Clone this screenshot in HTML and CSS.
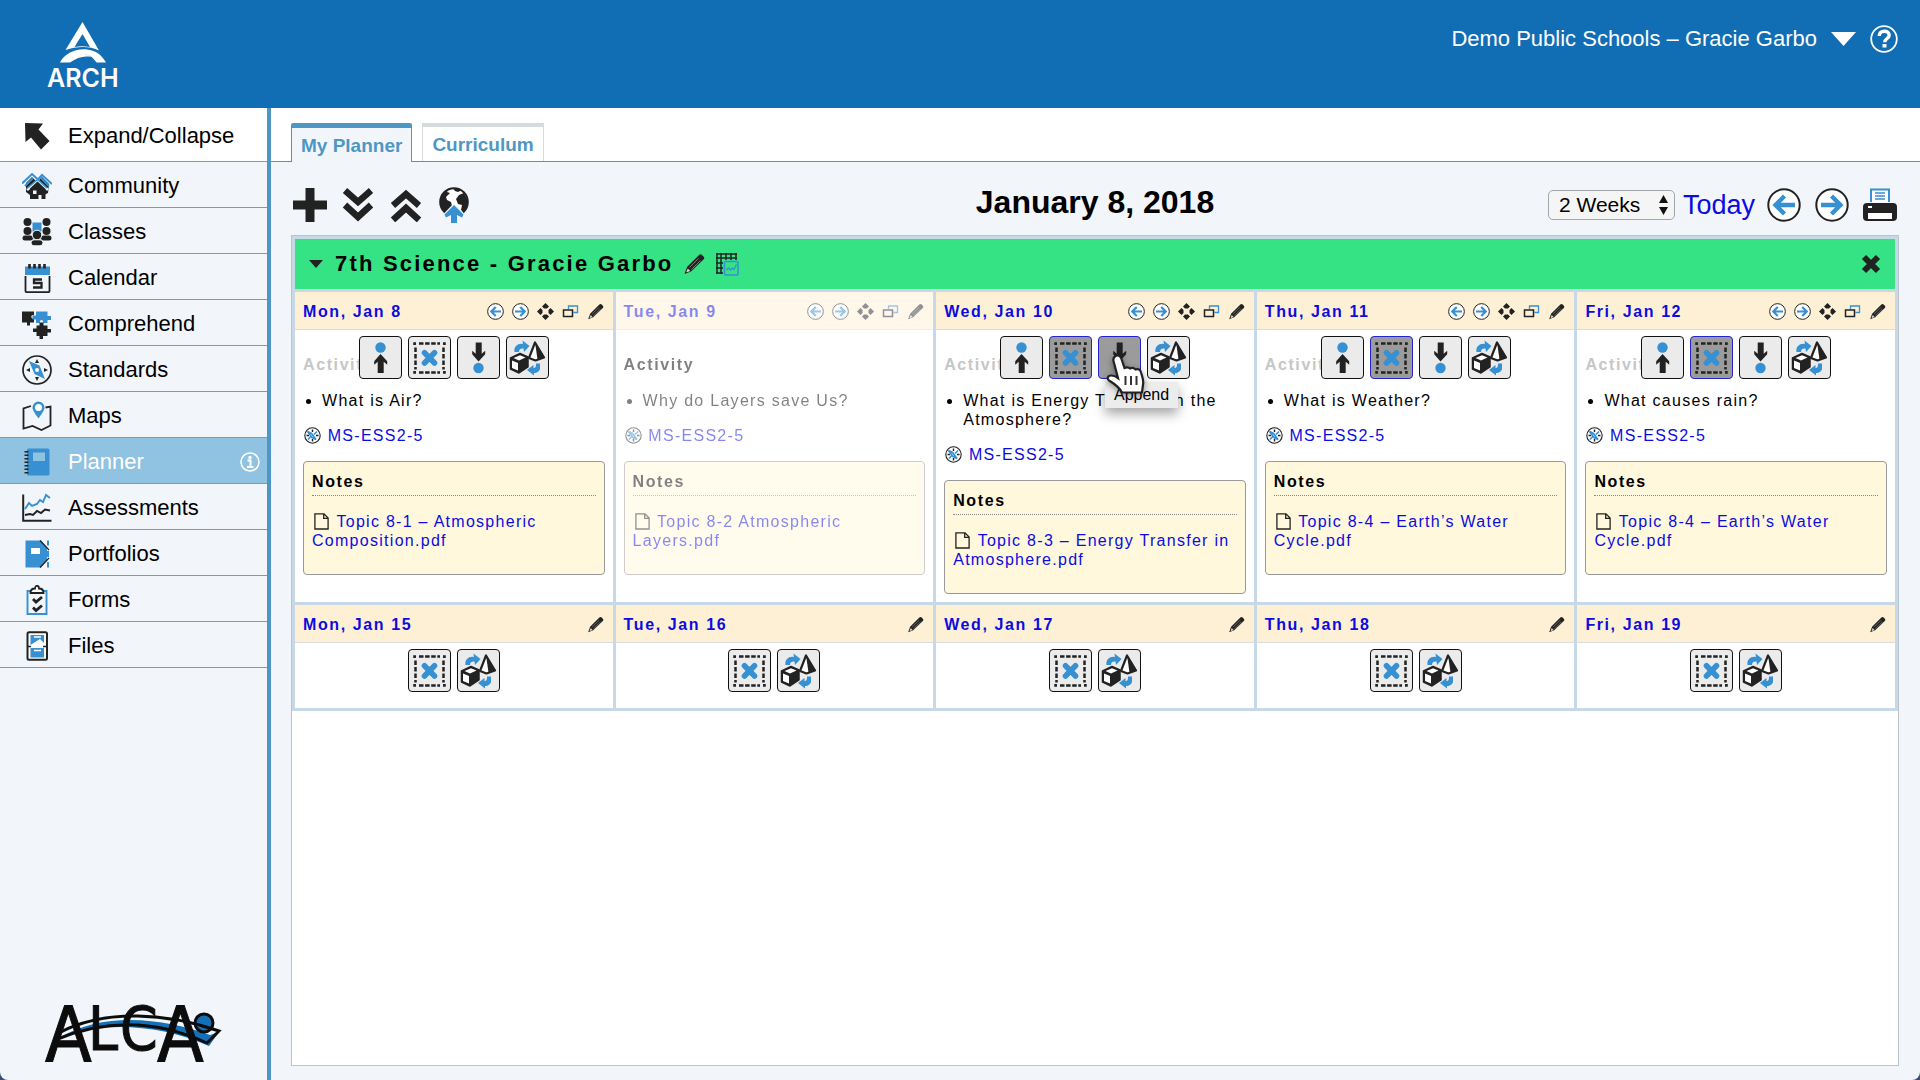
FILE: index.html
```html
<!DOCTYPE html>
<html lang="en">
<head>
<meta charset="utf-8">
<title>ARCH – Planner</title>
<link rel="stylesheet" href="styles.css">
</head>
<body>
<svg class="sprite" aria-hidden="true">
  <symbol id="prev" viewBox="0 0 34 34"><circle cx="17" cy="17" r="15.7" fill="#fff" stroke="#222" stroke-width="2"/><path d="M28 17H10M17.5 8l-9 9 9 9" fill="none" stroke="#3690d2" stroke-width="4.4"/></symbol>
  <symbol id="next" viewBox="0 0 34 34"><circle cx="17" cy="17" r="15.7" fill="#fff" stroke="#222" stroke-width="2"/><path d="M6 17h18M16.500 8l9 9-9 9" fill="none" stroke="#3690d2" stroke-width="4.400"/></symbol>
  <symbol id="move" viewBox="0 0 17 17"><path d="M8.500 0l3.500 3.500-2 2H7l-2-2zM8.500 17l3.500-3.500-2-2H7l-2 2zM0 8.500L3.500 5l2 2v3l-2 2zM17 8.500L13.500 5l-2 2v3l2 2z" fill="#222"/></symbol>
  <symbol id="copy" viewBox="0 0 17 17"><path d="M6.500 6V3h9v6.500h-4" fill="none" stroke="#3690d2" stroke-width="1.300"/><path d="M1.500 7h9v6.500h-9z" fill="none" stroke="#222" stroke-width="1.500"/></symbol>
  <symbol id="pencil" viewBox="0 0 22 22"><path d="M16 2q1.500-1.500 3 0l1.500 1.500q1.500 1.500 0 3L8 18.500 1.500 21 4 14z" fill="#222"/><path d="M6.500 14.500L15.500 5.500M8.500 16.500L17.500 7.500" stroke="#fff" stroke-opacity=".5" stroke-width=".8"/><path d="M4.800 15.500l2.500 2.500-3.300 1.300-.6-.6z" fill="#fff" fill-opacity=".8"/></symbol>
  <symbol id="prepend" viewBox="0 0 41 41"><circle cx="20.500" cy="10.500" r="5.200" fill="#3690d2"/><path d="M20.500 17l6.700 7.200v3.600l-3.500-3V36h-6V24.800l-3.500 3v-3.600z" fill="#222"/></symbol>
  <symbol id="append" viewBox="0 0 41 41"><circle cx="20.500" cy="31" r="5.200" fill="#3690d2"/><path d="M20.500 24.500l6.700-7.200v-3.600l-3.500 3V5.500h-6v11.200l-3.500-3v3.600z" fill="#222"/></symbol>
  <symbol id="clear" viewBox="0 0 41 41"><path d="M5.500 8V6.500H7M34 6.500h1.500V8M35.500 34v1.500H34M7 35.500H5.500V34M10 6.500h21M10 35.500h21" fill="none" stroke="#222" stroke-width="2.500" stroke-dasharray="4.500 1.600"/><path d="M6.500 10.500v22M34.500 10.500v22" stroke="#222" stroke-width="2.500" stroke-dasharray="4.500 2"/><path d="M15.500 15.800L25.500 26M25.500 15.800L15.500 26" stroke="#3690d2" stroke-width="5.600" stroke-linecap="round"/></symbol>
  <symbol id="convert" viewBox="0 0 41 41"><path d="M7.500 15c-1-6 4-9 8.500-8l-.5-3.500L22.500 9l-5.500 6-.5-3.500c-3-.5-4.500 1-4.500 3.500z" fill="#3690d2"/><path d="M33 26.500v5c0 2.500-3 4.500-6 4.500v2.500L20 33l6.500-5v3c2 0 2.500-1 2.500-4.500z" fill="#3690d2"/><path d="M28 5.500L22 21l6.500 2.500 8.500-3z" fill="#fff" stroke="#222" stroke-width="2.200" stroke-linejoin="round"/><path d="M28 5l2.500 17.500 7-2.500z" fill="#222"/><path d="M3.500 21l9.500-4.500 8 3.500v10L12 36l-8.500-4z" fill="#222" stroke="#222" stroke-width="1.500" stroke-linejoin="round"/><path d="M5 23.500l6 2.500v7.500L5 31z" fill="#fff"/><path d="M6.500 21l6.500-2.800 5.500 2.200-6.500 3z" fill="#fff"/></symbol>
  <symbol id="standard" viewBox="0 0 17 17"><circle cx="8.500" cy="8.500" r="7.700" fill="#fff" stroke="#222" stroke-width="1.100"/><path d="M3.500 4.500l4 2 4.500 6-4-2zM4 12.500l3-3.300M10 7.500l3-3" fill="none" stroke="#3690d2" stroke-width="1.600"/><path d="M8.500 2.500V5M8.500 12v2.500M2.500 8.500H5M12 8.500h2.500" stroke="#222" stroke-width="1.400"/></symbol>
  <symbol id="doc" viewBox="0 0 15 17"><path d="M.9.900H10L14.100 5v11H.900zM9.700 1v4.300H14" fill="none" stroke="#222" stroke-width="1.300"/></symbol>
</svg>

<header class="banner">
  <a class="brand" href="#" aria-label="ARCH home">
    <svg class="brand-mark" viewBox="0 0 46 41" aria-hidden="true"><path fill="#fff" fill-rule="evenodd" d="M22.500 0L39 28.500c-9-4.500-22-4.500-33.500-.5zM22.500 12l-8 13c5-1.200 10.500-1 15.500 0zM0 40.500C5 31 16 26.500 27 27.500c8 .8 14 4.500 19 13h-9.500c-4-6-8-8-12.500-8 3 .3 5 1 7 2.500-7-1.500-14 .5-21 5.500z"/></svg>
    <span class="brand-name">ARCH</span>
  </a>
  <div class="account">
    <span>Demo Public Schools – Gracie Garbo</span>
    <button class="plain" aria-label="Account menu"><svg width="25" height="14" viewBox="0 0 25 14"><path d="M0 0h25L12.500 14z" fill="#fff"/></svg></button>
    <button class="plain" aria-label="Help"><svg width="28" height="28" viewBox="0 0 28 28"><circle cx="14" cy="14" r="12.800" fill="none" stroke="#fff" stroke-width="1.800"/><path d="M9.200 11c0-6.500 10-6 10-.8 0 3.300-4.500 3.300-4.500 7" fill="none" stroke="#fff" stroke-width="3.400"/><path d="M12.500 19h4v3.500h-4z" fill="#fff"/></svg></button>
  </div>
</header>

<div class="shell">
  <nav class="sidebar" aria-label="Main">
    <a class="nav-item nav-toggle" href="#"><svg viewBox="0 0 30 30"><path d="M3 2l18 .5-4.500 6L27.500 20 19 28.500 9 16.500 3.500 21z" fill="#222"/></svg>Expand/Collapse</a>
    <a class="nav-item" href="#"><svg viewBox="0 0 30 30"><path d="M4 12l6-6 5 5 5-5 7 7-1 9-4 2H8l-4-3z" fill="#222"/><path d="M0 12.500L10 3l6 5.500 4-4.500 10 9M3 15L11 7M19 7l8 8" fill="none" stroke="#3690d2" stroke-width="2"/><path d="M5 19L15.500 9.500 26 19" fill="none" stroke="#f2f6fb" stroke-width="2.500"/><path d="M8 17.500l7.500-7 8 7.500v10h-4V20h-3v8H8z" fill="#222"/><path d="M11 19.500h3.500V23H11z" fill="#f2f6fb"/><path d="M5 17.500L15.500 8.500 25 17" fill="none" stroke="#3690d2" stroke-width="1.600"/></svg>Community</a>
    <a class="nav-item" href="#"><svg viewBox="0 0 30 30"><path d="M10.500 5.500h9v9h-9z" fill="#3690d2"/><g fill="#222"><circle cx="5.500" cy="5" r="4"/><circle cx="24.500" cy="5" r="4"/><circle cx="5.500" cy="14" r="4"/><circle cx="24.500" cy="14" r="4"/><rect x=".5" y="18.500" width="10.500" height="5" rx="2.500"/><rect x="19" y="18.500" width="10.500" height="5" rx="2.500"/></g><g fill="#222" stroke="#f2f6fb"><circle cx="15" cy="18" r="4.800"/><rect x="9" y="22.800" width="12" height="6" rx="3"/></g></svg>Classes</a>
    <a class="nav-item" href="#"><svg viewBox="0 0 30 30"><path d="M3 3.500h25V12H3z" fill="#3690d2"/><path d="M3.500 13v15q0 1.200 1.200 1.200h21.600q1.200 0 1.200-1.200V13" fill="none" stroke="#222" stroke-width="1.800"/><path d="M7.500 1v4.500M12.500 1v4.500M17.500 1v4.500M22.500 1v4.500" stroke="#222" stroke-width="2.600"/><path d="M20 16.500h-8V20h7.500v4.500h-8.500" fill="none" stroke="#222" stroke-width="2.300"/></svg>Calendar</a>
    <a class="nav-item" href="#"><svg viewBox="0 0 30 30"><path d="M0 2.500h12v4c-3-2-4 4 0 3v4H8v3H5v-3H0z" fill="#222"/><path d="M14 2.500h11.500V7H29v4h-3.500v3H21c1-4-4-4-3 0h-4v-3.500h-3.500v-4H14z" fill="#3690d2"/><path d="M14.500 16.500h3v-3h4v3h4V20H29v3.500h-3.500V27H21v3h-3.500v-3h-3v-4H11v-3.500h3.500z" fill="#222"/></svg>Comprehend</a>
    <a class="nav-item" href="#"><svg viewBox="0 0 30 30"><circle cx="15" cy="15" r="14" fill="none" stroke="#222" stroke-width="1.700"/><path d="M7 6l10.500 4.500L23 24l-10.500-5z" fill="#3690d2"/><circle cx="15" cy="15" r="2" fill="#fff"/><path d="M15 4l2 4h-4zM15 26l2-4h-4zM4 15l4-2v4zM26 15l-4-2v4z" fill="#222"/></svg>Standards</a>
    <a class="nav-item" href="#"><svg viewBox="0 0 30 30"><path d="M9 5L1.500 7.500v20l9-2.500 9 4 9-4.500V5.500l-5 1" fill="none" stroke="#222" stroke-width="1.800"/><path d="M16.500 17.500C12 11 10.500 9 10.500 6.500a6 6 0 0 1 12 0c0 2.500-1.500 4.500-6 11z" fill="#3690d2"/><circle cx="16.500" cy="6.500" r="3.500" fill="#fff"/></svg>Maps</a>
    <a class="nav-item nav-current" href="#" aria-current="page"><svg viewBox="0 0 30 30"><rect x="5" y="1.500" width="22.500" height="27" rx="1.500" fill="#3690d2"/><path d="M11 5.500h12V14H11z" fill="#90c3e1"/><path d="M4.500 4v24" stroke="#222" stroke-width="4" stroke-dasharray="1.500 2"/></svg>Planner<svg class="nav-info" viewBox="0 0 20 20"><circle cx="10" cy="10" r="9" fill="none" stroke="#fff" stroke-width="1.500"/><circle cx="10" cy="5.500" r="1.700" fill="#fff"/><path d="M7.500 8.500h3v6M7 15h6.500" fill="none" stroke="#fff" stroke-width="2"/></svg></a>
    <a class="nav-item" href="#"><svg viewBox="0 0 30 30"><path d="M1.200 1.500v26.300H29.500" fill="none" stroke="#222" stroke-width="2"/><path d="M3 16l4-6 3 3 5-2 3-4 3 2 3-7 4 3" fill="none" stroke="#3690d2" stroke-width="1.900"/><path d="M3 22l5-1 3 1 4-4 4 2 4-3.500 5 1" fill="none" stroke="#222" stroke-width="1.900"/></svg>Assessments</a>
    <a class="nav-item" href="#"><svg viewBox="0 0 30 30"><path d="M3.500 1.500H19l6 7v13l-6 7H3.500z" fill="#3690d2"/><path d="M9 9h9v6H9z" fill="#fff"/><path d="M26 1.500v5M26 12v6M26 23v5.500" stroke="#3690d2" stroke-width="2"/><path d="M18 1.500L27 11M18 28.500L27 19" stroke="#222" stroke-width="1.200"/></svg>Portfolios</a>
    <a class="nav-item" href="#"><svg viewBox="0 0 30 30"><path d="M8 6H5.500v23h19V6H22" fill="none" stroke="#3690d2" stroke-width="1.900"/><path d="M8.500 8c0-4 3-4.500 4.500-4.500 0-3.500 4-3.500 4 0 2 0 4.500.5 4.500 4.500z" fill="#fff" stroke="#222" stroke-width="1.800"/><path d="M11 14l3 3 6-5M11 22.500l3 3 6-5" fill="none" stroke="#222" stroke-width="2.800"/></svg>Forms</a>
    <a class="nav-item" href="#"><svg viewBox="0 0 30 30"><rect x="5.500" y="1.200" width="19.500" height="27.500" rx="1.500" fill="#fff" stroke="#222" stroke-width="2"/><path d="M8.500 4H22v8l-4-4-9.500 6zM8.500 17H22v9.500H8.500z" fill="#3690d2"/><path d="M12 6h7M12 19.500h7" stroke="#fff" stroke-width="1.500"/><path d="M7 15l11-6 5 6-1 2H8z" fill="#fff"/><path d="M5 15.500h4M21 15.500h4" stroke="#222" stroke-width="1.300"/></svg>Files</a>
    <svg class="partner" viewBox="0 0 178 64" role="img" aria-label="ALCA">
      <path d="M12 37C60 8 120 17 165 33l9-3-10 14C110 20 50 20 12 37z" fill="#1471b8"/>
      <circle cx="160" cy="21" r="9" fill="#1471b8"/>
      <g class="partner-letters"><text x="0" y="59" font-size="76">A</text><text x="43" y="48" font-size="60">L</text><text x="75" y="48" font-size="60">C</text><text x="112" y="59" font-size="76">A</text></g>
      <path d="M12 32C60 5 125 12 174 29l-12 12C110 17 60 17 10 38" fill="none" stroke="#0c0c0c" stroke-width="3"/>
      <circle cx="159" cy="21" r="9" fill="none" stroke="#0c0c0c" stroke-width="3"/>
    </svg>
  </nav>

  <main class="main">
    <div class="tabs">
      <a class="tab tab-active" href="#">My Planner</a>
      <a class="tab" href="#">Curriculum</a>
    </div>
    <div class="content">
      <div class="toolbar">
        <div class="tools">
          <button class="plain" aria-label="Add"><svg width="34" height="34" viewBox="0 0 34 34"><path d="M12.500 0h9v12.500H34v9H21.500V34h-9V21.500H0v-9h12.500z" fill="#222"/></svg></button>
          <button class="plain" aria-label="Expand all"><svg width="34" height="34" viewBox="0 0 34 34"><path d="M4 2.500l13 11.500L30 2.500M4 17l13 12L30 17" fill="none" stroke="#222" stroke-width="6.500"/></svg></button>
          <button class="plain" aria-label="Collapse all"><svg width="34" height="34" viewBox="0 0 34 34"><path d="M4 17.500L17 6l13 11.500M4 32l13-12 13 12" fill="none" stroke="#222" stroke-width="6.500"/></svg></button>
          <button class="plain" aria-label="Publish"><svg width="34" height="36" viewBox="0 0 34 36"><circle cx="17" cy="15" r="13.800" fill="#fff" stroke="#222" stroke-width="2"/><path d="M3.500 13C4 8 8 3.500 12 2l-2 3 3 1-4 4 1 3 4 2 1 4-3 3-1 5c-5-2-8-8-7.500-14zM16 1.500c3-.5 6 .5 8 2l-3 1.500-3-1zM22 8l5-2 3 6c1 5 0 9-4 13l-2-2 1-5-4-1-2-5z" fill="#222"/><path d="M17 16l11 11.500h-6V36H12v-8.500H6z" fill="#f2f6fb"/><path d="M17 18l9.500 9.500-1.500 3-5-2.500v8h-6v-8l-5 2.500-1.500-3z" fill="#3690d2"/></svg></button>
        </div>
        <h1 class="range-title">January 8, 2018</h1>
        <div class="range">
          <span class="select-box">
            <select aria-label="Range"><option>2 Weeks</option></select>
            <svg width="11" height="20" viewBox="0 0 11 20" aria-hidden="true"><path d="M1 8l4.500-8L10 8zM1 12h9l-4.500 8z" fill="#111"/></svg>
          </span>
          <a class="today" href="#">Today</a>
          <button class="plain" aria-label="Previous"><svg width="34" height="34"><use href="#prev"/></svg></button>
          <button class="plain" aria-label="Next"><svg width="34" height="34"><use href="#next"/></svg></button>
          <button class="plain" aria-label="Print"><svg width="34" height="34" viewBox="0 0 34 34"><path d="M8 14V1.500h18V14" fill="#fff" stroke="#3690d2" stroke-width="2"/><path d="M12 5h10M12 8h10M12 11h10" stroke="#3690d2" stroke-width="1.400"/><rect y="15" width="34" height="18" rx="4" fill="#222"/><path d="M5 25h24v6H5z" fill="#fff"/><rect x="5" y="18" width="4" height="2" fill="#fff"/></svg></button>
        </div>
      </div>

      <div class="planner">
        <table class="weeks">
          <thead>
            <tr><th colspan="5" scope="colgroup">
              <div class="course">
                <button class="plain" aria-label="Fold course"><svg width="14" height="8" viewBox="0 0 14 8"><path d="M0 0h14L7 8z" fill="#222"/></svg></button>
                <span class="course-name">7th Science - Gracie Garbo</span>
                <button class="plain" aria-label="Edit course"><svg width="22" height="22"><use href="#pencil"/></svg></button>
                <button class="plain" aria-label="Course grid"><svg width="24" height="24" viewBox="0 0 24 24"><path d="M1 2h21M1 6h21M1 11h7M1 16h7M1 21h7M2 1v21M6 1v21M11 1v7M16 1v7M21 1v7" stroke="#222" stroke-width="1.500"/><rect x="9.500" y="9.500" width="13.500" height="13.500" rx="1" fill="none" stroke="#3690d2" stroke-width="1.500"/><path d="M11.500 18l2-2 2 2 2-2 1.500 1.500 2.500-5" fill="none" stroke="#3690d2" stroke-width="1.300"/></svg></button>
                <button class="plain course-close" aria-label="Close course"><svg width="20" height="20" viewBox="0 0 20 20"><path d="M3 3l14 14M17 3L3 17" stroke="#222" stroke-width="6"/></svg></button>
              </div>
            </th></tr>
          </thead>
          <tbody>
            <tr>
              <td>
                <div class="day-head"><a href="#">Mon, Jan 8</a><button class="plain" aria-label="Shift back"><svg><use href="#prev"/></svg></button><button class="plain" aria-label="Shift forward"><svg><use href="#next"/></svg></button><button class="plain" aria-label="Move"><svg><use href="#move"/></svg></button><button class="plain" aria-label="Copy"><svg><use href="#copy"/></svg></button><button class="plain" aria-label="Edit"><svg><use href="#pencil"/></svg></button></div>
                <div class="day">
                  <div class="actions over"><button class="act" aria-label="Prepend"><svg><use href="#prepend"/></svg></button><button class="act" aria-label="Replace"><svg><use href="#clear"/></svg></button><button class="act" aria-label="Append"><svg><use href="#append"/></svg></button><button class="act" aria-label="Convert"><svg><use href="#convert"/></svg></button></div>
                  <h2 class="faint">Activity</h2>
                  <ul><li>What is Air?</li></ul>
                  <p><svg class="std"><use href="#standard"/></svg> <a href="#">MS-ESS2-5</a></p>
                  <section class="note"><h3>Notes</h3><p><svg class="file"><use href="#doc"/></svg> <a href="#">Topic 8-1 – Atmospheric Composition.pdf</a></p></section>
                </div>
              </td>
              <td>
                <div class="cut">
                <div class="day-head"><a href="#">Tue, Jan 9</a><button class="plain" aria-label="Shift back"><svg><use href="#prev"/></svg></button><button class="plain" aria-label="Shift forward"><svg><use href="#next"/></svg></button><button class="plain" aria-label="Move"><svg><use href="#move"/></svg></button><button class="plain" aria-label="Copy"><svg><use href="#copy"/></svg></button><button class="plain" aria-label="Edit"><svg><use href="#pencil"/></svg></button></div>
                <div class="day">
                  <h2>Activity</h2>
                  <ul><li>Why do Layers save Us?</li></ul>
                  <p><svg class="std"><use href="#standard"/></svg> <a href="#">MS-ESS2-5</a></p>
                  <section class="note"><h3>Notes</h3><p><svg class="file"><use href="#doc"/></svg> <a href="#">Topic 8-2 Atmospheric Layers.pdf</a></p></section>
                </div>
                </div>
              </td>
              <td>
                <div class="day-head"><a href="#">Wed, Jan 10</a><button class="plain" aria-label="Shift back"><svg><use href="#prev"/></svg></button><button class="plain" aria-label="Shift forward"><svg><use href="#next"/></svg></button><button class="plain" aria-label="Move"><svg><use href="#move"/></svg></button><button class="plain" aria-label="Copy"><svg><use href="#copy"/></svg></button><button class="plain" aria-label="Edit"><svg><use href="#pencil"/></svg></button></div>
                <div class="day">
                  <div class="actions over"><button class="act" aria-label="Prepend"><svg><use href="#prepend"/></svg></button><button class="act pressed" aria-label="Replace"><svg><use href="#clear"/></svg></button><span class="hovered"><button class="act pressed" aria-label="Append" aria-describedby="tip"><svg><use href="#append"/></svg></button><span class="tip" id="tip" role="tooltip">Append</span><svg class="pointer" viewBox="0 0 42 40" aria-hidden="true"><path d="M9.500 2c2.500-1.500 5 0 6 3l3 9c2-1 4-1 5.500.5 2-1 4-.5 5.500 1 2.500-1 5 0 5.500 3 1.500 5 3 8 2 12l-1 8H16c-3-6-8-9-13-12-2.500-2-1-5 2-5 3 0 5 1 7 2.500L7.500 7c-.5-2 .3-4 2-5z" fill="#fff" stroke="#222" stroke-width="2.200"/><path d="M19.500 22v9M25 22v9M30.500 22v9" stroke="#333" stroke-width="2"/></svg></span><button class="act" aria-label="Convert"><svg><use href="#convert"/></svg></button></div>
                  <h2 class="faint">Activity</h2>
                  <ul><li>What is Energy Transfer in the Atmosphere?</li></ul>
                  <p><svg class="std"><use href="#standard"/></svg> <a href="#">MS-ESS2-5</a></p>
                  <section class="note"><h3>Notes</h3><p><svg class="file"><use href="#doc"/></svg> <a href="#">Topic 8-3 – Energy Transfer in Atmosphere.pdf</a></p></section>
                </div>
              </td>
              <td>
                <div class="day-head"><a href="#">Thu, Jan 11</a><button class="plain" aria-label="Shift back"><svg><use href="#prev"/></svg></button><button class="plain" aria-label="Shift forward"><svg><use href="#next"/></svg></button><button class="plain" aria-label="Move"><svg><use href="#move"/></svg></button><button class="plain" aria-label="Copy"><svg><use href="#copy"/></svg></button><button class="plain" aria-label="Edit"><svg><use href="#pencil"/></svg></button></div>
                <div class="day">
                  <div class="actions over"><button class="act" aria-label="Prepend"><svg><use href="#prepend"/></svg></button><button class="act pressed" aria-label="Replace"><svg><use href="#clear"/></svg></button><button class="act" aria-label="Append"><svg><use href="#append"/></svg></button><button class="act" aria-label="Convert"><svg><use href="#convert"/></svg></button></div>
                  <h2 class="faint">Activity</h2>
                  <ul><li>What is Weather?</li></ul>
                  <p><svg class="std"><use href="#standard"/></svg> <a href="#">MS-ESS2-5</a></p>
                  <section class="note"><h3>Notes</h3><p><svg class="file"><use href="#doc"/></svg> <a href="#">Topic 8-4 – Earth’s Water Cycle.pdf</a></p></section>
                </div>
              </td>
              <td>
                <div class="day-head"><a href="#">Fri, Jan 12</a><button class="plain" aria-label="Shift back"><svg><use href="#prev"/></svg></button><button class="plain" aria-label="Shift forward"><svg><use href="#next"/></svg></button><button class="plain" aria-label="Move"><svg><use href="#move"/></svg></button><button class="plain" aria-label="Copy"><svg><use href="#copy"/></svg></button><button class="plain" aria-label="Edit"><svg><use href="#pencil"/></svg></button></div>
                <div class="day">
                  <div class="actions over"><button class="act" aria-label="Prepend"><svg><use href="#prepend"/></svg></button><button class="act pressed" aria-label="Replace"><svg><use href="#clear"/></svg></button><button class="act" aria-label="Append"><svg><use href="#append"/></svg></button><button class="act" aria-label="Convert"><svg><use href="#convert"/></svg></button></div>
                  <h2 class="faint">Activity</h2>
                  <ul><li>What causes rain?</li></ul>
                  <p><svg class="std"><use href="#standard"/></svg> <a href="#">MS-ESS2-5</a></p>
                  <section class="note"><h3>Notes</h3><p><svg class="file"><use href="#doc"/></svg> <a href="#">Topic 8-4 – Earth’s Water Cycle.pdf</a></p></section>
                </div>
              </td>
            </tr>
            <tr>
              <td><div class="day-head"><a href="#">Mon, Jan 15</a><button class="plain" aria-label="Edit"><svg><use href="#pencil"/></svg></button></div><div class="actions"><button class="act" aria-label="Replace"><svg><use href="#clear"/></svg></button><button class="act" aria-label="Convert"><svg><use href="#convert"/></svg></button></div></td>
              <td><div class="day-head"><a href="#">Tue, Jan 16</a><button class="plain" aria-label="Edit"><svg><use href="#pencil"/></svg></button></div><div class="actions"><button class="act" aria-label="Replace"><svg><use href="#clear"/></svg></button><button class="act" aria-label="Convert"><svg><use href="#convert"/></svg></button></div></td>
              <td><div class="day-head"><a href="#">Wed, Jan 17</a><button class="plain" aria-label="Edit"><svg><use href="#pencil"/></svg></button></div><div class="actions"><button class="act" aria-label="Replace"><svg><use href="#clear"/></svg></button><button class="act" aria-label="Convert"><svg><use href="#convert"/></svg></button></div></td>
              <td><div class="day-head"><a href="#">Thu, Jan 18</a><button class="plain" aria-label="Edit"><svg><use href="#pencil"/></svg></button></div><div class="actions"><button class="act" aria-label="Replace"><svg><use href="#clear"/></svg></button><button class="act" aria-label="Convert"><svg><use href="#convert"/></svg></button></div></td>
              <td><div class="day-head"><a href="#">Fri, Jan 19</a><button class="plain" aria-label="Edit"><svg><use href="#pencil"/></svg></button></div><div class="actions"><button class="act" aria-label="Replace"><svg><use href="#clear"/></svg></button><button class="act" aria-label="Convert"><svg><use href="#convert"/></svg></button></div></td>
            </tr>
          </tbody>
        </table>
      </div>
    </div>
  </main>
</div>
</body>
</html>
```
FILE: styles.css
```css
* { box-sizing: border-box; }

body {
  margin: 0;
  min-height: 100vh;
  display: flex;
  flex-direction: column;
  background: #3d4c73;
  color: #000;
  font-family: "Liberation Sans", Arial, sans-serif;
  font-size: 16px;
  line-height: 19px;
}

svg { display: block; }
.sprite { position: absolute; width: 0; height: 0; }

a { color: #0c0ce0; text-decoration: none; }
h1, h2, h3, p, ul { margin: 0; }

.plain {
  display: block;
  padding: 0;
  border: 0;
  background: none;
  cursor: pointer;
}

/* Banner */
.banner {
  display: flex;
  justify-content: space-between;
  align-items: flex-start;
  height: 108px;
  padding: 22px 22px 0 47px;
  background: #116db4;
  color: #fff;
}
.brand {
  display: flex;
  flex-direction: column;
  align-items: center;
  color: #fff;
}
.brand-mark { width: 46px; height: 41px; }
.brand-name {
  font: 600 25px/31px Inter, sans-serif;
}
.account {
  display: flex;
  align-items: center;
  gap: 14px;
  padding-top: 3px;
  font-size: 22px;
  line-height: 28px;
}

/* Sidebar */
.shell { display: flex; flex: 1; }
.sidebar {
  display: flex;
  flex-direction: column;
  flex: none;
  width: 271px;
  border-right: 4px solid #4f97c3;
  border-bottom-left-radius: 8px;
  background: #f2f6fb;
}
.nav-item {
  display: flex;
  align-items: center;
  gap: 16px;
  height: 46px;
  padding: 2px 7px 0 22px;
  border-bottom: 1px solid #8399ab;
  color: #000;
  font-size: 22px;
}
.nav-item svg { width: 30px; height: 30px; }
.nav-toggle { height: 54px; background: #fff; }
.nav-current { background: #90c3e1; color: #fff; }
.nav-item .nav-info { width: 20px; height: 20px; margin-left: auto; }
.partner {
  width: 178px;
  height: 64px;
  margin: auto 0 14px 45px;
  overflow: visible;
}
.partner-letters {
  fill: #0c0c0c;
  stroke: #0c0c0c;
  font-family: "DejaVu Sans Condensed", "DejaVu Sans", sans-serif;
}

/* Tabs */
.main {
  display: flex;
  flex-direction: column;
  flex: 1;
  min-width: 0;
  border-bottom-right-radius: 8px;
  background: #f2f6fb;
}
.tabs {
  display: flex;
  align-items: flex-end;
  gap: 10px;
  height: 54px;
  padding-left: 20px;
  border-bottom: 1px solid #4f97c3;
  background: #fff;
}
.tab {
  height: 38px;
  padding: 8px 9px 0;
  border: 1px solid #d6dbde;
  border-top-width: 4px;
  border-bottom: 0;
  color: #4f97c3;
  font-size: 19px;
  font-weight: bold;
}
.tab-active {
  height: 39px;
  margin-bottom: -1px;
  border-color: #4f97c3;
  border-top-width: 5px;
  border-radius: 2px 2px 0 0;
  background: #f2f6fb;
}

/* Toolbar */
.content {
  display: flex;
  flex-direction: column;
  flex: 1;
  padding: 0 21px 14px 20px;
}
.toolbar {
  display: grid;
  grid-template-columns: 1fr auto 1fr;
  align-items: center;
  height: 73px;
  padding: 12px 2px 0;
}
.tools { display: flex; align-items: center; gap: 14px; }
.range-title { font-size: 32px; line-height: 36px; margin-bottom: 6px; }
.range { display: flex; align-items: center; justify-content: flex-end; gap: 14px; }
.select-box { position: relative; margin-right: -6px; }
.select-box select {
  display: block;
  appearance: none;
  width: 127px;
  height: 30px;
  padding: 0 10px;
  border: 1px solid #a3a6aa;
  border-radius: 5px;
  background: #f5f5f5;
  color: #000;
  font: 21px/28px "Liberation Sans", Arial, sans-serif;
}
.select-box svg { position: absolute; top: 5px; right: 6px; pointer-events: none; }
.today { margin-right: -2px; font-size: 27px; line-height: 32px; }

/* Planner */
.planner {
  flex: 1;
  border: 1px solid #bcc4cb;
  background: #fff;
}
.weeks {
  width: 100%;
  table-layout: fixed;
  border-spacing: 3px;
  background: #c7d8e7;
}
.weeks th, .weeks td { padding: 0; vertical-align: top; background: #fff; }
.weeks th { background: #35e384; }

.course {
  display: flex;
  align-items: center;
  gap: 10px;
  height: 50px;
  padding: 0 14px;
}
.course-name { margin-left: 2px; font-size: 22px; line-height: 26px; letter-spacing: 0.1em; }
.course-close { margin-left: auto; }

.day-head {
  display: flex;
  align-items: center;
  gap: 8px;
  height: 38px;
  padding: 1px 9px 0 8px;
  border-bottom: 1px solid #d9dde0;
  background: #fef0d5;
  font-weight: bold;
  letter-spacing: 0.1em;
}
.day-head a { margin-right: auto; }
.day-head svg { width: 17px; height: 17px; }

.day {
  position: relative;
  padding: 25px 8px 8px;
  letter-spacing: 0.08em;
}
.day h2, .day h3 { font-size: 16px; line-height: 19px; letter-spacing: 0.1em; }
.day .faint { color: #c6c6c6; }
.day ul { margin: 17px 0 16px; padding-left: 19px; }
.day p svg { display: inline-block; vertical-align: -3px; }
.std { width: 17px; height: 17px; margin: 0 1px; }
.file { width: 15px; height: 17px; margin: 0 2px; }
.cut { opacity: 0.5; }

.note {
  margin-top: 16px;
  padding: 10px 8px 24px;
  border: 1px solid #999;
  border-radius: 4px;
  background: #fff8dc;
}
.note h3 {
  margin-bottom: 16px;
  padding-bottom: 4px;
  border-bottom: 1px dotted #888;
}

/* Day action buttons */
.actions {
  display: flex;
  justify-content: center;
  gap: 6px;
  padding: 6px 0 16px;
}
.actions.over {
  position: absolute;
  z-index: 1;
  top: 0;
  left: 0;
  right: 0;
}
.act {
  display: block;
  padding: 0;
  border: 1px solid #111;
  border-radius: 4px;
  background: #ebebeb;
}
.act svg { width: 41px; height: 41px; }
.act.pressed { border-color: #2424c8; background: #9b9b9b; }

.hovered { position: relative; }
.tip {
  position: absolute;
  top: 46px;
  left: 7px;
  padding: 3px 9px 4px;
  background: #ececec;
  box-shadow: 0 6px 12px rgba(0, 0, 0, 0.35);
  letter-spacing: 0;
}
.pointer { position: absolute; top: 18px; left: 8px; width: 42px; height: 40px; filter: drop-shadow(0 2px 3px rgba(0, 0, 0, 0.4)); }
```
